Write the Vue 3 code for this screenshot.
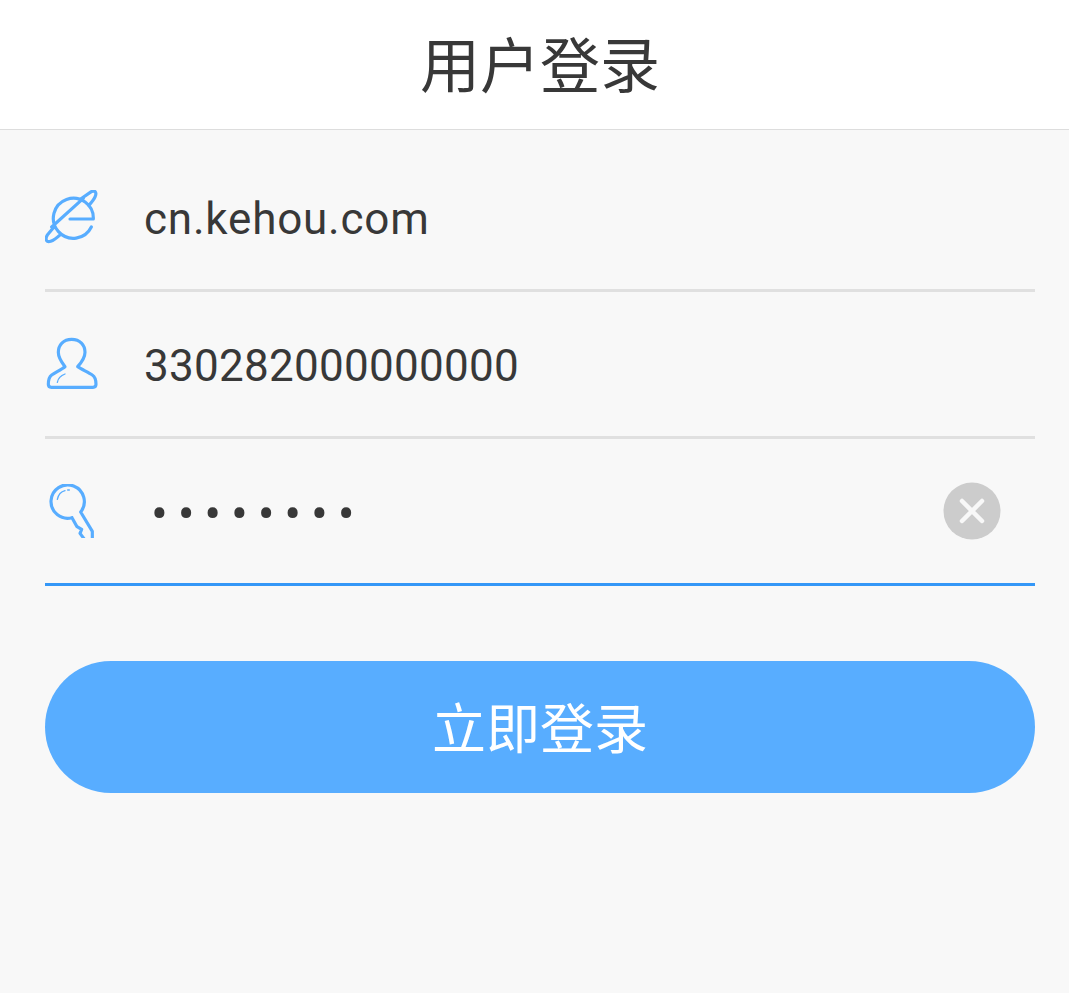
<script setup>
import { ref } from 'vue';

const site = ref('cn.kehou.com');
const account = ref('330282000000000');
const password = ref('12345678');

const clearPassword = () => {
  password.value = '';
};
</script>

<template>
  <div class="page">
    <header class="title-bar">用户登录</header>
    <form class="login-form" @submit.prevent>
      <div class="field">
        <svg class="icon" viewBox="45 45 162 162" aria-hidden="true">
          <path d="M120 132H190A60 60 0 1 0 184 156M65 156L160 70M152 72L184 50C196 44 201 54 195 66C190 76 183 84 176 92M72 156L52 180C44 194 50 203 62 199C71 196 81 188 92 178" />
        </svg>
        <input v-model="site" class="field-input site" type="text">
      </div>
      <div class="field">
        <svg class="icon" viewBox="45 36 162 162" aria-hidden="true">
          <path d="M125 43C100 43 85 60 85 82C85 100 95 112 105 125C95 133 77 142 65 150C57 156 55 165 55 178C55 185 58 187 64 187H189C195 187 198 185 198 178C198 165 195 155 187 150C175 142 155 133 143 125C155 112 165 100 165 82C165 60 150 43 125 43Z" />
          <path class="shine" d="M82 172C84 160 92 152 105 147" />
        </svg>
        <input v-model="account" class="field-input account" type="text">
      </div>
      <div class="field field-active">
        <svg class="icon" viewBox="45 42 162 162" aria-hidden="true">
          <path d="M126 143A50 50 0 1 1 152 126L187 184V210M165 210L150 190L155 178L141 170L126 143" />
          <path class="shine" d="M82 88C85 74 93 65 105 62M113 60H118" />
        </svg>
        <input v-model="password" class="field-input password" type="password">
        <button class="clear" type="button" aria-label="清除" @click="clearPassword">
          <svg viewBox="0 0 58 58" aria-hidden="true">
            <circle cx="29" cy="29" r="28.5" />
            <path d="M19 19L39 39M39 19L19 39" />
          </svg>
        </button>
      </div>
      <button class="submit" type="submit">立即登录</button>
    </form>
  </div>
</template>

<style scoped>
.page {
  min-height: 993px;
  background: #f8f8f8;
  font-family: "Roboto", "Noto Sans CJK SC", sans-serif;
  color: #383838;
}
.title-bar {
  height: 129px;
  padding-left: 11px;
  line-height: 136px;
  text-align: center;
  font-size: 60px;
  background: #fff;
  border-bottom: 1px solid #ddd;
}
.login-form {
  padding: 15px 34px 0 45px;
}
.field {
  display: flex;
  align-items: center;
  height: 144px;
  border-bottom: 3px solid #e0e0e0;
}
.field-active {
  border-bottom-color: #3497f7;
}
.icon {
  flex: none;
  width: 54px;
  height: 54px;
  margin-right: 45px;
  fill: none;
  stroke: #58adff;
  stroke-width: 9.5;
  stroke-linecap: round;
  stroke-linejoin: round;
}
.icon .shine {
  stroke-width: 4;
}
.field-input {
  flex: 1;
  min-width: 0;
  padding: 0;
  border: 0;
  outline: 0;
  background: transparent;
  font: inherit;
  font-size: 44px;
  color: #383838;
}
.site {
  letter-spacing: 0.8px;
  padding-top: 3px;
}
.account {
  letter-spacing: 0.27px;
  padding-top: 3px;
}
.password {
  font-size: 50px;
  letter-spacing: 9.8px;
  padding: 6px 0 0 7px;
}
.clear {
  flex: none;
  width: 58px;
  height: 58px;
  margin-right: 34px;
  padding: 0;
  border: 0;
  background: none;
}
.clear svg {
  display: block;
  width: 58px;
  height: 58px;
}
.clear circle {
  fill: #ccc;
}
.clear path {
  fill: none;
  stroke: #f8f8f8;
  stroke-width: 4.5;
  stroke-linecap: round;
}
.submit {
  display: block;
  width: 100%;
  height: 132px;
  margin-top: 75px;
  padding: 0 0 4px;
  border: 0;
  border-radius: 66px;
  background: #58adff;
  color: #fff;
  font: inherit;
  font-size: 54px;
}
</style>
